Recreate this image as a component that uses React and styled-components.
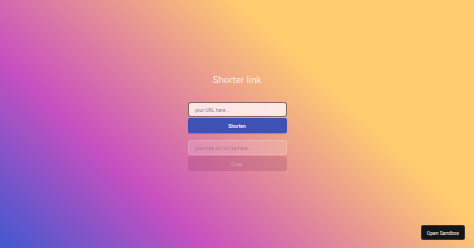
import React, { useState } from "react";
import styled, { createGlobalStyle } from "styled-components";

const GlobalStyle = createGlobalStyle`
  html, body {
    margin: 0;
    padding: 0;
    height: 100%;
  }
  body {
    font-family: Roboto, "Liberation Sans", sans-serif;
  }
  #root {
    height: 100%;
  }
`;

const Page = styled.div`
  position: relative;
  width: 100%;
  height: 100vh;
  background: linear-gradient(43deg, #4158d0 0%, #c850c0 28%, #ffcc70 68%);
  display: flex;
  justify-content: center;
  box-sizing: border-box;
  padding-top: 74px;
`;

const Card = styled.div`
  width: 99px;
  display: flex;
  flex-direction: column;
  align-items: stretch;
`;

const Title = styled.h1`
  margin: 0 0 17px;
  font-size: 9.6px;
  font-weight: 400;
  text-align: center;
  color: rgba(255, 255, 255, 0.82);
  white-space: nowrap;
`;

const Field = styled.input`
  box-sizing: border-box;
  height: 15px;
  width: 100%;
  margin: 0;
  padding: 0 6px;
  font-family: inherit;
  font-size: 5px;
  border-radius: 3px;
  outline: none;
  border: 1px solid
    ${(p) => (p.$faded ? "rgba(255, 255, 255, 0.14)" : "rgba(80, 50, 50, 0.7)")};
  background: ${(p) =>
    p.$faded ? "rgba(255, 255, 255, 0.16)" : "rgba(255, 240, 240, 0.88)"};
  color: #555;
  &::placeholder {
    color: ${(p) =>
      p.$faded ? "rgba(120, 50, 90, 0.4)" : "rgba(110, 90, 95, 0.8)"};
  }
`;

const Button = styled.button`
  box-sizing: border-box;
  height: 15px;
  width: 100%;
  margin: 1px 0 0;
  padding: 0;
  border: none;
  border-radius: 2px;
  font-family: inherit;
  font-size: 5px;
  font-weight: 500;
  cursor: pointer;
  background: ${(p) => (p.$faded ? "rgba(130, 40, 90, 0.2)" : "#3f51b5")};
  color: ${(p) => (p.$faded ? "rgba(255, 255, 255, 0.3)" : "#fff")};
  box-shadow: ${(p) => (p.$faded ? "none" : "0 1px 1px rgba(0,0,0,0.2)")};
`;

const Spacer = styled.div`
  height: 7px;
`;

const SandboxButton = styled.a`
  position: absolute;
  right: 9px;
  bottom: 8px;
  height: 13px;
  padding: 0 5px;
  display: flex;
  align-items: center;
  border-radius: 2px;
  background: #151515;
  color: #fff;
  font-size: 5px;
  text-decoration: none;
  border: 1px solid rgba(255, 255, 255, 0.15);
`;

export default function App() {
  const [url, setUrl] = useState("");

  return (
    <>
      <GlobalStyle />
      <Page>
        <Card>
          <Title>Shorter link</Title>
          <Field
            placeholder="your URL here..."
            value={url}
            onChange={(e) => setUrl(e.target.value)}
          />
          <Button>Shorten</Button>
          <Spacer />
          <Field $faded placeholder="your new url will be here..." disabled />
          <Button $faded disabled>
            Copy
          </Button>
        </Card>
        <SandboxButton href="#">Open Sandbox</SandboxButton>
      </Page>
    </>
  );
}
